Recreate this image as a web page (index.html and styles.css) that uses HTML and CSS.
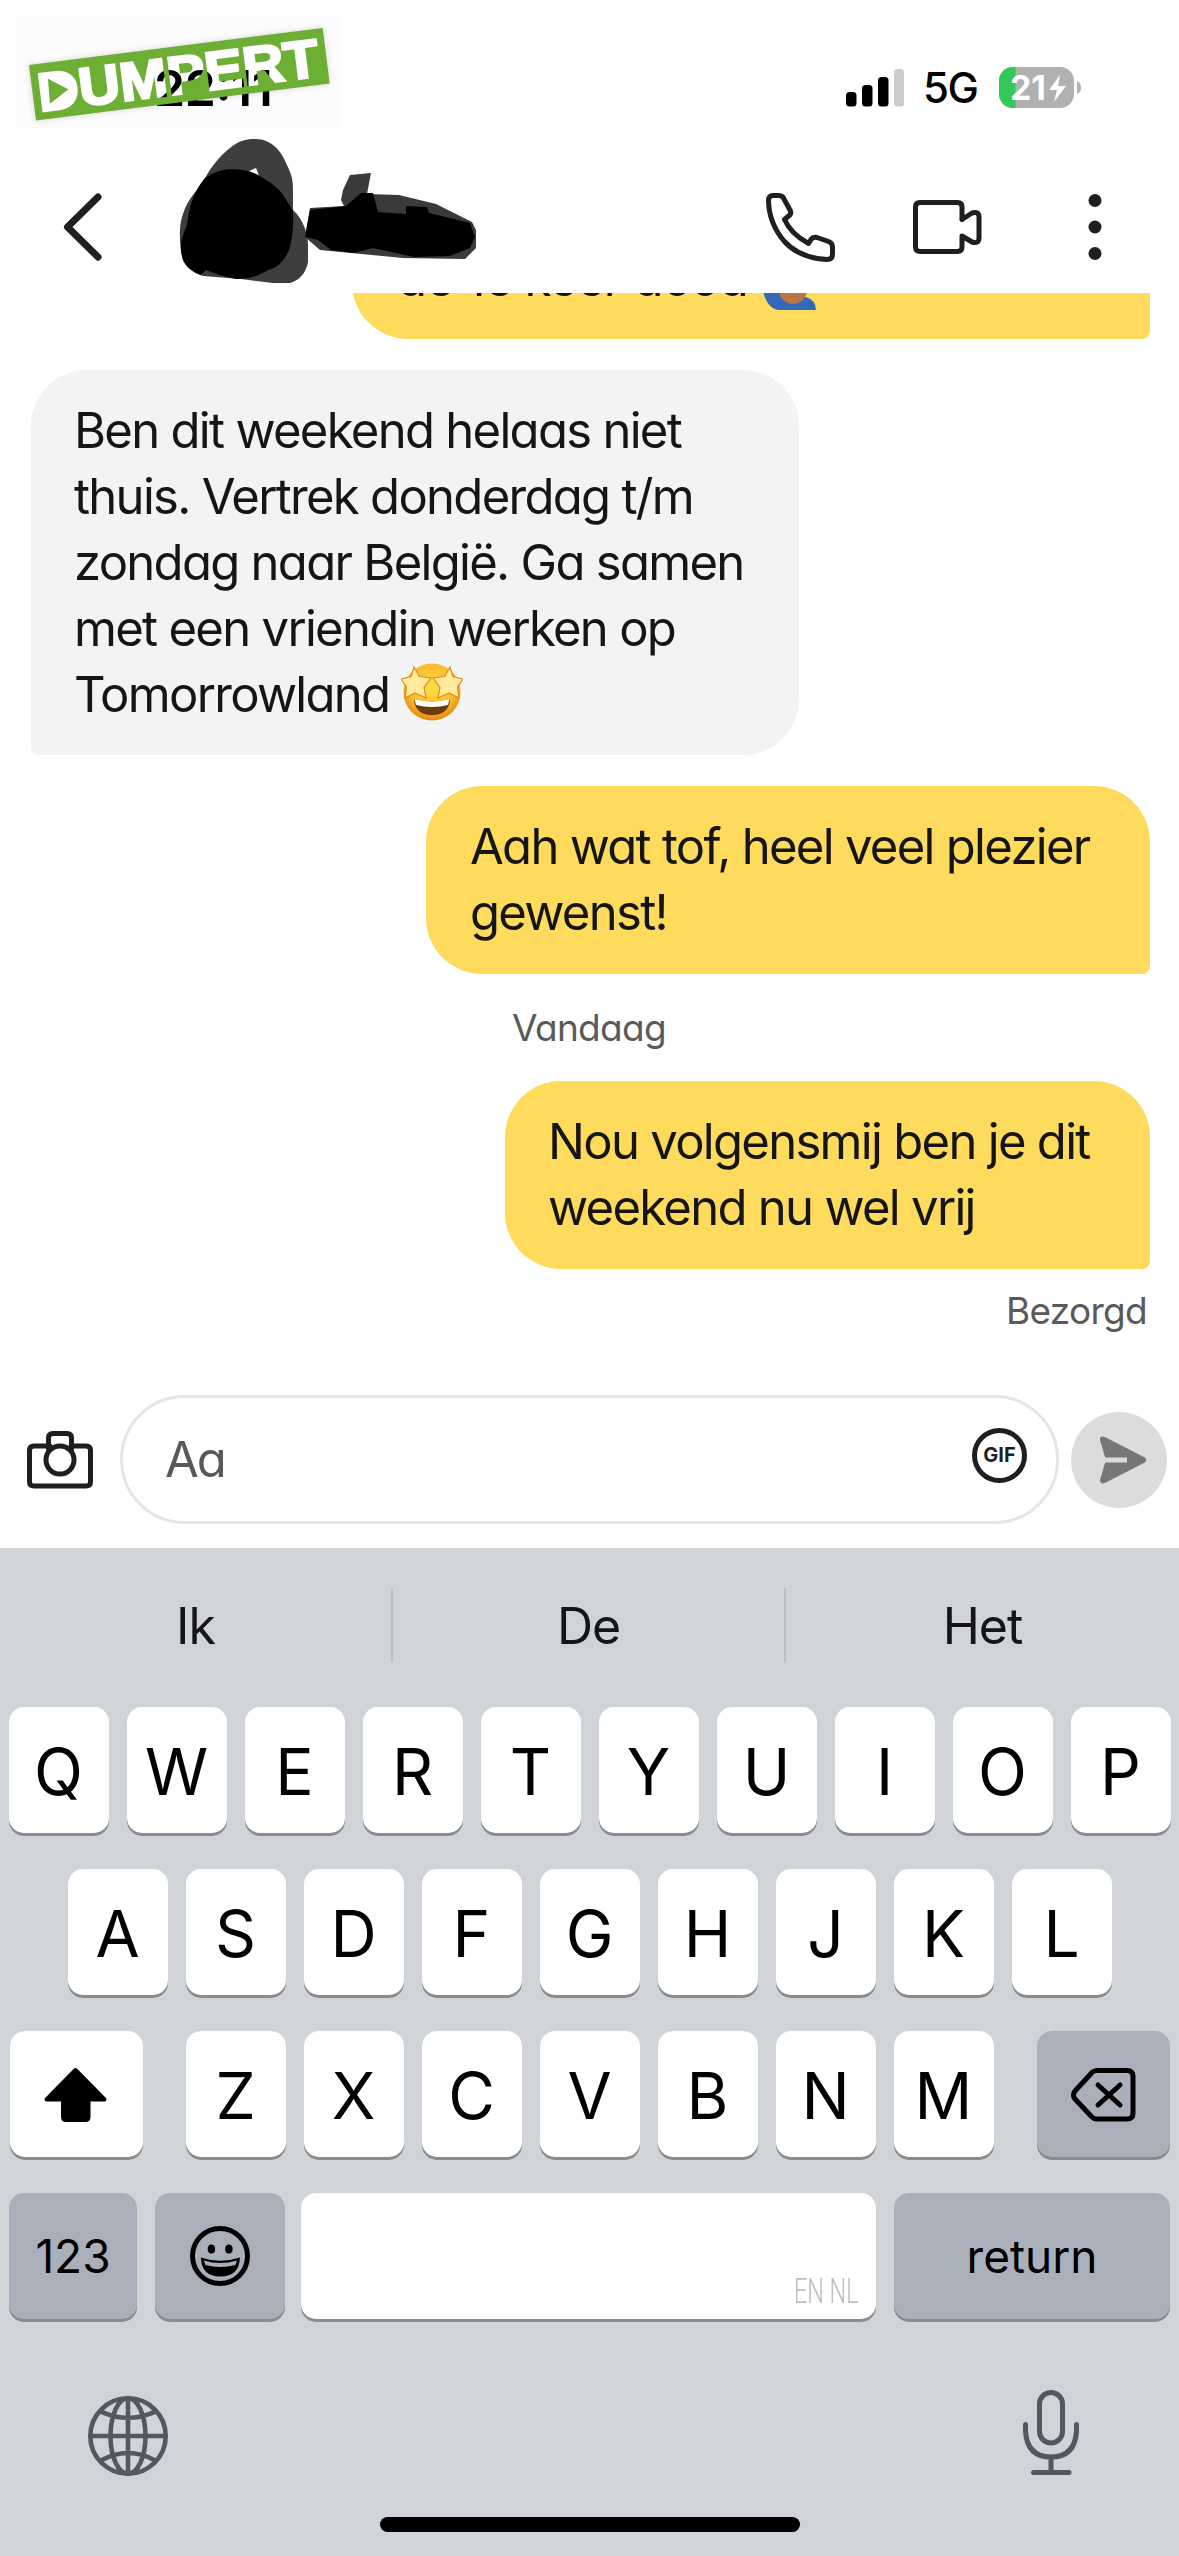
FILE: index.html
```html
<!DOCTYPE html>
<html lang="nl">
<head>
<meta charset="utf-8">
<title>Chat</title>
<link rel="stylesheet" href="styles.css">
</head>
<body>
<div class="app">
  <header class="top">
    <div class="status">
      <svg class="clock" width="324" height="112" viewBox="16 16 324 112">
        <defs>
          <mask id="cut" maskUnits="userSpaceOnUse" x="-20" y="-20" width="360" height="120">
            <rect x="-20" y="-20" width="360" height="120" fill="#fff"/>
            <text class="stamp" x="5" y="47.500" textLength="283" lengthAdjust="spacingAndGlyphs" fill="#000" stroke="#000">DUMPERT</text>
            <path d="M14 12h12a14 16 0 0 1 0 32h-12z" fill="#000"/>
            <path d="M17 16l19 13l-20 12z" fill="#fff"/>
          </mask>
          <filter id="soft" x="-10%" y="-30%" width="120%" height="160%"><feGaussianBlur stdDeviation="3"/></filter>
        </defs>
        <rect x="16" y="16" width="324" height="112" fill="#fcfcfc"/>
        <g transform="translate(29 65) rotate(-7.2)">
          <rect width="296" height="56" fill="#d5d5dc" filter="url(#soft)"/>
          <rect x="6" y="4" width="284" height="48" fill="#fff"/>
        </g>
        <text class="time" x="154" y="106" textLength="119">22:11</text>
        <g transform="translate(29 65) rotate(-7.2)">
          <rect width="296" height="56" fill="#6dae35" mask="url(#cut)"/>
        </g>
      </svg>
      <div class="indicators">
        <svg width="58" height="38" viewBox="846 69 58 38">
          <rect x="846" y="92" width="10.5" height="14.5" rx="3.5"/>
          <rect x="862" y="85" width="10.5" height="21.5" rx="3.5"/>
          <rect x="878" y="77" width="10.5" height="29.5" rx="3.5"/>
          <rect x="894" y="69" width="10" height="37.5" rx="3.5" fill="#cbcbcb"/>
        </svg>
        <span class="network">5G</span>
        <svg width="84" height="42" viewBox="999 67 84 42">
          <defs><clipPath id="cell"><rect x="999" y="67" width="75" height="41" rx="14"/></clipPath></defs>
          <g clip-path="url(#cell)">
            <rect x="999" y="67" width="75" height="41" fill="#b1b1b1"/>
            <rect x="999" y="67" width="16.500" height="41" fill="#34c759"/>
          </g>
          <path d="M1077 81q4 2 4 6.500t-4 6.500z" fill="#b1b1b1"/>
          <text class="percent" x="1010" y="100" textLength="36">21</text>
          <path d="M1060 75l-11 15h8l-3 12l12-16h-8z" fill="#fff"/>
        </svg>
      </div>
    </div>
    <div class="bar">
      <svg width="42" height="72" viewBox="61 190 42 72"><path class="line" stroke-width="7" d="M98 196L67.500 226L98 256"/></svg>
      <svg class="contact" width="302" height="150" viewBox="178 136 302 150">
        <path fill="#3e3e3e" fill-rule="evenodd" d="M254 139C271 138 282 152 286 163C292 175 293 180 293 190V210C302 218 308 232 308 245V262C306 274 298 281 290 283H273L241 279L203 276C190 272 182 263 182 256C179 243 179 224 183 214C188 198 198 190 204 180C212 165 220 156 230 148C238 141 246 139 254 139zM249 171L256 168L260 178z"/>
        <path d="M205 178Q218 169 233 169Q253 170 263 178Q280 188 285 198L293 211Q294 235 289 250Q282 267 268 270Q252 280 236 279Q220 276 206 270L201 275Q182 268 181 250Q180 240 187 225Q190 195 205 178z"/>
        <path fill="#3a3a3a" d="M350 175L371 173L367 194L399 195L436 204L472 222L476 230V248L465 259L403 258L320 250L305 237L310 208L344 206L341 200L343 190z"/>
        <path d="M310 210L346 206L361 193H373L378 212L406 214V206L427 207L429 213L470 223L475 237L470 248L450 256L414 257L373 248L354 253L331 250L318 240L305 237z"/>
      </svg>
      <nav class="actions">
        <svg width="72" height="72" viewBox="764 190 72 72"><path class="line" stroke-width="5" d="M773 194.500H779Q783 194.500 784.500 199L790.500 210Q791.500 213.500 788 215.500L784.500 218.500Q791 233 808.500 242.500L811 238.500Q813 235.500 817 236.500L828.500 240.500Q832.500 242 832.500 246V253Q832.500 258.500 827 258.500Q799 257 784 240Q769 222 768.500 200Q768.500 194.500 773 194.500z"/></svg>
        <svg width="72" height="72" viewBox="911 190 72 72"><path class="line" stroke-width="5" d="M962 218.500V206Q962 201.500 957.500 201.500H920Q915.500 201.500 915.500 206V246Q915.500 250.500 920 250.500H957.500Q962 250.500 962 246V235L972 241Q979 243 979 237V216Q979 210 972 212L962 218.500"/></svg>
        <svg width="14" height="72" viewBox="1088 191 14 72" fill="#1f1f1f"><circle cx="1095" cy="200.500" r="6.500"/><circle cx="1095" cy="227" r="6.500"/><circle cx="1095" cy="253.500" r="6.500"/></svg>
      </nav>
    </div>
  </header>

  <main class="chat">
    <p class="bubble sent clipped">de 1e keer dood <svg class="wave" width="60" height="62" viewBox="0 0 60 62"><path d="M2 38Q6 62 20 62H56Q56 52 46 49Q34 46 28 54Q22 48 16 38z" fill="#3468b8"/><circle cx="33" cy="42" r="14" fill="#b87545"/><path d="M18 50Q30 62 44 53L56 62H20Q14 60 10 50z" fill="#3468b8"/></svg></p>
    <p class="bubble received">Ben dit weekend helaas niet<br>thuis. Vertrek donderdag t/m<br>zondag naar België. Ga samen<br>met een vriendin werken op<br>Tomorrowland <svg class="stars" width="62" height="58" viewBox="0 0 62 58">
      <defs><radialGradient id="face" cx=".5" cy=".4" r=".6"><stop offset="0" stop-color="#ffe14a"/><stop offset=".7" stop-color="#fbb62b"/><stop offset="1" stop-color="#e48a12"/></radialGradient></defs>
      <circle cx="31" cy="29" r="28.500" fill="url(#face)"/>
      <path d="M13 36Q31 41 49 36Q48 52 31 52Q14 52 13 36z" fill="#6f3d0c"/>
      <path d="M13.500 36Q31 41 48.500 36L47 42Q31 46 15 42z" fill="#fff"/>
      <path d="M13 4L18.500 13.500L30 15L23 24.500L25 35L14 30L4 35L5.500 24L0 16L10 13.500z" fill="#ffeb9b" stroke="#d98e17" stroke-width="1.200"/>
      <path d="M49 4L43.500 13.500L32 15L39 24.500L37 35L48 30L58 35L56.500 24L62 16L52 13.500z" fill="#ffeb9b" stroke="#d98e17" stroke-width="1.200"/>
    </svg></p>
    <p class="bubble sent wide">Aah wat tof, heel veel plezier<br>gewenst!</p>
    <p class="day">Vandaag</p>
    <p class="bubble sent narrow">Nou volgensmij ben je dit<br>weekend nu wel vrij</p>
    <p class="receipt">Bezorgd</p>
  </main>

  <section class="composer">
    <svg width="68" height="60" viewBox="26 1430 68 60"><g class="line" stroke-width="5"><path d="M50 1446H34Q29.500 1446 29.500 1450V1482Q29.500 1486 34 1486H86Q90.500 1486 90.500 1482V1450Q90.500 1446 86 1446H71"/><path d="M48.500 1449V1438Q48.500 1433.500 53 1433.500H67Q71.500 1433.500 71.500 1438V1449"/><circle cx="60" cy="1460" r="14"/></g></svg>
    <div class="field"><span>Aa</span><b class="gif">GIF</b></div>
    <div class="send"><svg width="50" height="50" viewBox="1098 1435 50 50"><path d="M1103 1439.500L1143 1460L1103 1480.500L1109 1460z" fill="#777" stroke="#777" stroke-width="6" stroke-linejoin="round"/><path d="M1104 1457.500h23v5h-23z" fill="#dcdcdc"/></svg></div>
  </section>

  <section class="keyboard">
    <div class="suggest"><span>Ik</span><span>De</span><span>Het</span></div>
    <div class="row"><kbd>Q</kbd><kbd>W</kbd><kbd>E</kbd><kbd>R</kbd><kbd>T</kbd><kbd>Y</kbd><kbd>U</kbd><kbd>I</kbd><kbd>O</kbd><kbd>P</kbd></div>
    <div class="row"><kbd>A</kbd><kbd>S</kbd><kbd>D</kbd><kbd>F</kbd><kbd>G</kbd><kbd>H</kbd><kbd>J</kbd><kbd>K</kbd><kbd>L</kbd></div>
    <div class="row">
      <kbd class="shift"><svg width="66" height="58" viewBox="42 2065 66 58"><path d="M74.500 2069L103.500 2098.500H87.500V2116Q87.500 2119 84.500 2119H65Q62 2119 62 2116V2098.500H45.500z" stroke="#000" stroke-width="4" stroke-linejoin="round"/></svg></kbd>
      <kbd>Z</kbd><kbd>X</kbd><kbd>C</kbd><kbd>V</kbd><kbd>B</kbd><kbd>N</kbd><kbd>M</kbd>
      <kbd class="erase"><svg width="66" height="56" viewBox="1070 2066 66 56"><g fill="none" stroke="#000" stroke-width="5" stroke-linecap="round" stroke-linejoin="round"><path d="M1097 2069.500H1127Q1133 2069.500 1133 2075.500V2112Q1133 2118 1127 2118H1097Q1094 2118 1092 2116L1075 2098Q1072 2094 1075 2090L1092 2071.500Q1094 2069.500 1097 2069.500z"/><path d="M1098 2084L1120 2104M1120 2084L1098 2104"/></g></svg></kbd>
    </div>
    <div class="row">
      <kbd class="fn digits">123</kbd>
      <kbd class="fn smile"><svg width="62" height="62" viewBox="187.600 2225 62 62"><circle cx="218.600" cy="2256" r="27.500" fill="none" stroke="#000" stroke-width="5"/><ellipse cx="210" cy="2249" rx="3.700" ry="4.500"/><ellipse cx="227.500" cy="2249" rx="3.700" ry="4.500"/><path d="M199.500 2257.500Q218.500 2264 238.500 2257.500Q238 2276.500 219 2276.500Q200 2276.500 199.500 2257.500z"/><path d="M202.500 2260.500Q218.500 2265.500 235.500 2260.500L234 2265Q218.500 2269 204 2265z" fill="#aab0ba"/></svg></kbd>
      <kbd class="space"><span>EN NL</span></kbd>
      <kbd class="fn return">return</kbd>
    </div>
    <div class="dock">
      <svg width="82" height="82" viewBox="86.600 2394.700 82 82"><g fill="none" stroke="#54575e" stroke-width="4.600"><circle cx="127.600" cy="2435.700" r="37.700"/><ellipse cx="127.600" cy="2435.700" rx="17.500" ry="37.700"/><path d="M127.600 2398V2473.500M90 2435.700H165.500M100 2411Q127.600 2424 155.500 2411M100 2460.500Q127.600 2445 155.500 2460.500"/></g></svg>
      <svg width="58" height="88" viewBox="1022 2388 58 88"><g fill="none" stroke="#54575e" stroke-width="5" stroke-linecap="round"><rect x="1039.500" y="2392.500" width="23" height="50.500" rx="11.500"/><path d="M1025.500 2424.500V2431Q1027 2457 1051 2457Q1075 2457 1076.500 2431V2424.500M1051 2457V2472M1033.500 2472.500H1069"/></g></svg>
    </div>
    <div class="home"></div>
  </section>
</div>
</body>
</html>
```
FILE: styles.css
```css
* { box-sizing: border-box; margin: 0; }
body { background: #fff; font-family: Inter, "Liberation Sans", sans-serif; color: #151515; }
svg { display: block; flex: none; }
.app { width: 1179px; height: 2556px; display: flex; flex-direction: column; overflow: hidden; }

.top { height: 293px; flex: none; }
.status { height: 132px; padding: 16px 96px 0 16px; display: flex; justify-content: space-between; align-items: flex-start; }
.time { font: 600 50px Inter, sans-serif; }
.stamp { font: 700 54px "Liberation Sans", sans-serif; stroke-width: 2.5px; }
.indicators { display: flex; align-items: center; padding-top: 51px; }
.network { font-size: 42px; line-height: 42px; font-weight: 500; width: 54px; margin: 0 22px 0 19px; letter-spacing: -1.500px; color: #000; }
.percent { font: 700 34px Inter, sans-serif; fill: #fff; }
.bar { height: 161px; padding: 28px 77px 0 61px; display: flex; align-items: center; }
.contact { margin: -31px 0 0 75px; }
.actions { display: flex; margin-left: auto; }
.actions svg:nth-child(2) { margin-left: 75px; }
.actions svg:nth-child(3) { margin-left: 105px; }
.line { fill: none; stroke: #1f1f1f; stroke-linecap: round; stroke-linejoin: round; }

.chat { height: 1102px; flex: none; padding: 0 29px 0 31px; display: flex; flex-direction: column; overflow: hidden; font-feature-settings: "cv11"; }
.bubble { flex: none; padding: 28px 0 27px 43px; font-size: 49px; line-height: 66px; white-space: nowrap; letter-spacing: -1.700px; }
.bubble svg { display: inline-block; }
.sent { align-self: flex-end; background: #ffdb5d; border-radius: 56px 56px 8px 56px; }
.received { width: 768px; margin-top: 31px; background: #f3f3f3; border-radius: 56px 56px 56px 6px; }
.clipped { width: 798px; height: 121px; margin-top: -75px; padding-left: 45px; letter-spacing: -1.200px; }
.wave { vertical-align: -14px; }
.stars { vertical-align: -9px; }
.wide { width: 724px; height: 188px; margin-top: 31px; padding-left: 44px; }
.narrow { width: 645px; height: 188px; }
.day { height: 107px; padding: 32px 0 0 481px; font-size: 37px; line-height: 44px; letter-spacing: -.700px; color: #5a5a5a; }
.receipt { align-self: flex-end; padding: 20px 3px 0 0; font-size: 37px; line-height: 44px; letter-spacing: -.700px; color: #5a5a5a; }

.composer { height: 153px; flex: none; padding: 0 12px 24px 26px; display: flex; align-items: center; }
.field { width: 939px; height: 129px; margin: 0 12px 0 26px; padding: 0 29px 0 42px; border: 3px solid #e5e5e5; border-radius: 65px; display: flex; align-items: center; justify-content: space-between; font-size: 49px; color: #595959; font-feature-settings: "cv11"; letter-spacing: -2px; }
.gif { width: 55px; height: 55px; margin-top: -9px; border: 5px solid #1f1f1f; border-radius: 50%; display: grid; place-items: center; font-size: 20px; letter-spacing: 0; color: #1f1f1f; }
.send { width: 96px; height: 96px; border-radius: 50%; background: #dcdcdc; padding: 23px 0 0 27px; }

.keyboard { flex: 1; background: #d0d3d8; display: flex; flex-direction: column; }
.suggest { height: 159px; padding-top: 40px; display: grid; grid-template-columns: 391px 393px 395px; }
.suggest span { height: 74px; line-height: 76px; font-size: 50px; text-align: center; letter-spacing: -1px; }
.suggest span + span { border-left: 2px solid #bbbec3; }
.row { display: flex; justify-content: center; gap: 18px; height: 126px; margin-bottom: 36px; padding: 0 9px; }
kbd { width: 100px; height: 126px; flex: none; border-radius: 15px; background: #fff; box-shadow: 0 3px 0 #898b8f; display: grid; place-items: center; padding-top: 2px; font: 400 64px Inter, sans-serif; color: #000; }
kbd.shift { width: 133px; margin-right: 25px; }
kbd.erase { width: 133px; margin-left: 25px; background: #aab0ba; }
kbd.fn { background: #aab0ba; font-size: 46px; padding: 0; }
kbd.digits { width: 128px; }
kbd.smile { width: 130px; margin-right: -2px; }
kbd.space { width: 575px; place-items: end; padding: 0 17px 10px 0; }
.space span { font: 300 35px/35px Roboto, sans-serif; color: #bdbdbd; transform: scaleX(.67); transform-origin: right; white-space: nowrap; }
kbd.return { width: 276px; }
.dock { height: 126px; margin-top: 30px; padding: 0 99px 0 86.600px; display: flex; justify-content: space-between; }
.dock svg:first-child { margin-top: 9.700px; }
.dock svg:last-child { margin-top: 3px; }
.home { width: 420px; height: 15px; margin: 6px 0 0 380px; border-radius: 8px; background: #000; }
```
